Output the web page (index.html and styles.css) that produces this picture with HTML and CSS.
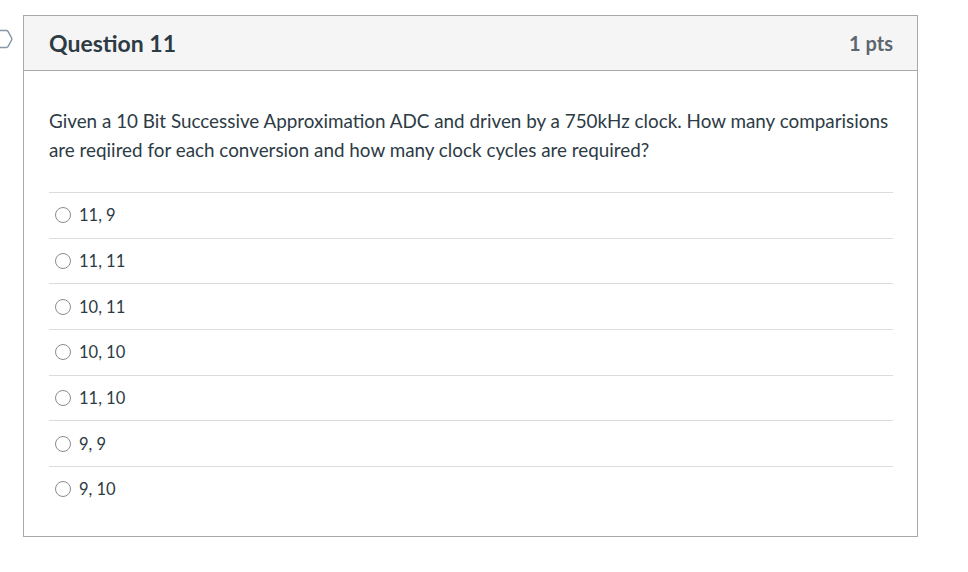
FILE: index.html
```html
<!DOCTYPE html>
<html>
<head>
<meta charset="utf-8">
<link rel="stylesheet" href="styles.css">
</head>
<body>
<svg class="tag" width="14" height="20" viewBox="0 0 14 20"><path d="M-4 1.5 H6.5 Q7.5 1.5 8 2.3 L11.6 9 Q12 10 11.6 11 L8 17.7 Q7.5 18.5 6.5 18.5 H-4" fill="#fff" stroke="#8796a8" stroke-width="1.5"/></svg>
<div class="card">
  <div class="header">
    <h2 class="title">Question 11</h2>
    <span class="pts">1 pts</span>
  </div>
  <div class="body">
    <p class="question">Given a 10 Bit Successive Approximation ADC and driven by a 750kHz clock. How many comparisions are reqiired for each conversion and how many clock cycles are required?</p>
    <div class="answers">
      <label class="answer"><span class="radio"></span><span>11, 9</span></label>
      <label class="answer"><span class="radio"></span><span>11, 11</span></label>
      <label class="answer"><span class="radio"></span><span>10, 11</span></label>
      <label class="answer"><span class="radio"></span><span>10, 10</span></label>
      <label class="answer"><span class="radio"></span><span>11, 10</span></label>
      <label class="answer"><span class="radio"></span><span>9, 9</span></label>
      <label class="answer"><span class="radio"></span><span>9, 10</span></label>
    </div>
  </div>
</div>
</body>
</html>
```
FILE: styles.css
```css
html, body {
  margin: 0;
  padding: 0;
  background: #fff;
}
body {
  font-family: Lato, "Liberation Sans", sans-serif;
  color: #2d3b45;
  position: relative;
  width: 968px;
  height: 572px;
  overflow: hidden;
}
.tag {
  position: absolute;
  left: 0;
  top: 29px;
}
.card {
  margin: 15px 0 0 23px;
  width: 893px;
  height: 520px;
  border: 1px solid #a9a9a9;
  box-sizing: content-box;
}
.header {
  display: flex;
  align-items: center;
  justify-content: space-between;
  height: 54px;
  background: #f5f5f5;
  border-bottom: 1px solid #a9a9a9;
  padding: 0 24px 0 25px;
}
.title {
  margin: 0;
  font-size: 23px;
  font-weight: 700;
  color: #2d3b45;
}
.pts {
  font-size: 20px;
  font-weight: 700;
  color: #5b6670;
}
.body {
  padding: 35px 24px 0 25px;
}
.question {
  margin: 0 -6px 0 0;
  font-size: 18.85px;
  line-height: 29px;
  color: #2d3b45;
}
.answers {
  margin-top: 28px;
}
.answer {
  display: flex;
  align-items: center;
  gap: 8px;
  height: 44.67px;
  border-top: 1px solid #dcdcdc;
  padding-left: 6px;
  font-size: 16.5px;
  color: #2d3b45;
}
.radio {
  width: 14px;
  height: 14px;
  border: 1.3px solid #8c8c8c;
  border-radius: 50%;
  flex: none;
}
```
